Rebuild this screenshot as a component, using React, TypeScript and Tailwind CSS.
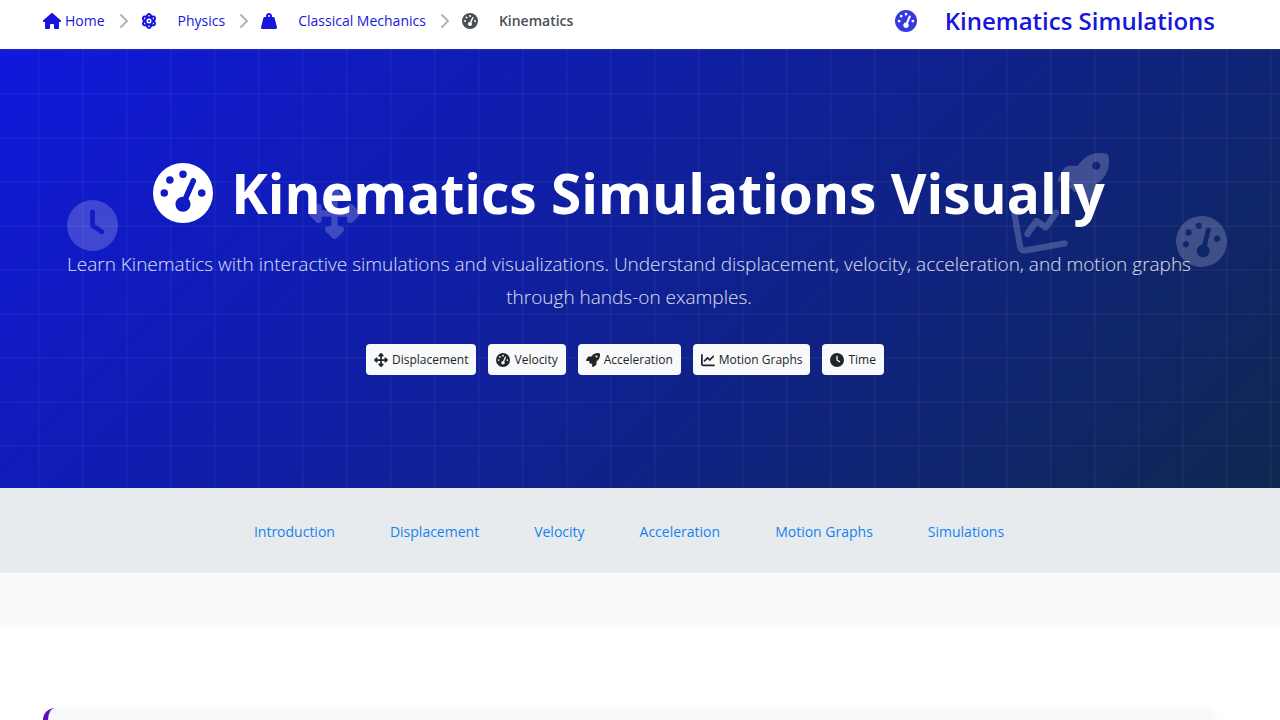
import React from 'react';
import { IconType } from 'react-icons';
import {
  FaAtom,
  FaChartLine,
  FaChevronRight,
  FaClock,
  FaGaugeHigh,
  FaHouse,
  FaRocket,
  FaUpDownLeftRight,
  FaWeightHanging,
} from 'react-icons/fa6';

type Item = { label: string; icon: IconType };

const crumbs: Item[] = [
  { label: 'Physics', icon: FaAtom },
  { label: 'Classical Mechanics', icon: FaWeightHanging },
];

const topics: Item[] = [
  { label: 'Displacement', icon: FaUpDownLeftRight },
  { label: 'Velocity', icon: FaGaugeHigh },
  { label: 'Acceleration', icon: FaRocket },
  { label: 'Motion Graphs', icon: FaChartLine },
  { label: 'Time', icon: FaClock },
];

const sections = ['Introduction', 'Displacement', 'Velocity', 'Acceleration', 'Motion Graphs', 'Simulations'];

function Separator() {
  return <FaChevronRight className="mx-2.5 size-4 text-[#adb5bd]" aria-hidden="true" />;
}

function Header() {
  return (
    <header className="flex h-[49px] items-center justify-between bg-white pb-2 pl-[43px] pr-[65px]">
      <nav aria-label="Breadcrumb">
        <ol className="flex items-center text-sm text-[#1616dc]">
          <li>
            <a href="#home" className="flex items-center gap-1">
              <FaHouse className="size-[18px]" />
              Home
            </a>
          </li>
          {crumbs.map(({ label, icon: Icon }) => (
            <li key={label} className="flex items-center">
              <Separator />
              <Icon className="size-4" />
              <a href="#topic" className="ml-[21px]">
                {label}
              </a>
            </li>
          ))}
          <li className="flex items-center font-semibold text-[#495057]" aria-current="page">
            <Separator />
            <FaGaugeHigh className="size-4" />
            <span className="ml-[21px]">Kinematics</span>
          </li>
        </ol>
      </nav>
      <div className="flex items-center gap-7 text-2xl font-semibold text-[#1616dc]">
        <FaGaugeHigh className="size-[22px] opacity-85" />
        <span>Kinematics Simulations</span>
      </div>
    </header>
  );
}

function FloatingIcons() {
  return (
    <div className="absolute inset-0 text-white/20" aria-hidden="true">
      <FaClock className="absolute left-[67px] top-[151px] size-[51px]" />
      <FaUpDownLeftRight className="absolute left-[309px] top-[139px] size-[51px]" />
      <FaRocket className="absolute right-[171px] top-[104px] size-[51px]" />
      <FaChartLine className="absolute right-[215px] top-[154px] size-[51px] -rotate-10" />
      <FaGaugeHigh className="absolute right-[53px] top-[167px] size-[51px] -rotate-10" />
    </div>
  );
}

function Hero() {
  return (
    <section className="relative bg-[linear-gradient(135deg,#1018dc_0%,#0f2850_100%)]">
      <div className="absolute inset-0 bg-[linear-gradient(#ffffff08_2px,transparent_2px),linear-gradient(90deg,#ffffff08_2px,transparent_2px)] bg-[size:44px_44px] bg-[position:38px_0px]" />
      <FloatingIcons />
      <div className="relative flex flex-col items-center pb-[113px] pl-[43px] pr-[65px] pt-[108px] text-center text-white">
        <h1 className="flex items-center gap-[18px] text-[55px] font-bold leading-[72px]">
          <FaGaugeHigh className="size-[60px]" />
          Kinematics Simulations Visually
        </h1>
        <p className="mt-[19px] text-[19px] font-light leading-[33px] text-white/85">
          Learn Kinematics with interactive simulations and visualizations. Understand displacement, velocity,
          acceleration, and motion graphs through hands-on examples.
        </p>
        <ul className="mr-2 mt-[30px] flex flex-wrap gap-3">
          {topics.map(({ label, icon: Icon }) => (
            <li
              key={label}
              className="flex h-[31px] items-center gap-1 rounded bg-[#f8f9fa] px-2 text-xs text-[#212529]"
            >
              <Icon className="size-3.5" />
              {label}
            </li>
          ))}
        </ul>
      </div>
    </section>
  );
}

function SectionNav() {
  return (
    <nav className="bg-[#e7ebee] pl-[43px] pr-[65px]" aria-label="Sections">
      <ul className="flex h-[85px] items-center justify-center gap-[55px] pt-0.5 text-sm text-[#1482ee]">
        {sections.map((name) => (
          <li key={name}>
            <a href={`#${name}`}>{name}</a>
          </li>
        ))}
      </ul>
    </nav>
  );
}

export default function App() {
  return (
    <div className="min-h-screen bg-white font-['Open_Sans','Noto_Sans',sans-serif]">
      <Header />
      <Hero />
      <SectionNav />
      <div className="h-[52px] bg-[#f8fafc]" />
      <main className="pl-[43px] pr-[65px] pt-[83px]">
        <section className="min-h-40 rounded-xl border-l-[5px] border-[#5f10b8] bg-[#f8f9fb] shadow-[0_4px_12px_#0000000d]" />
      </main>
    </div>
  );
}
